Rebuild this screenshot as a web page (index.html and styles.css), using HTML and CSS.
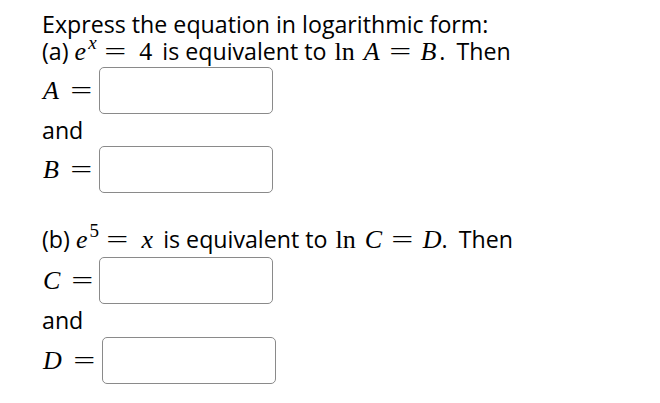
FILE: index.html
```html
<!DOCTYPE html>
<html>
<head>
<meta charset="utf-8">
<link rel="stylesheet" href="styles.css">
</head>
<body>
<div class="page">
  <p class="line">Express the equation in logarithmic form:</p>
  <p class="line">(a) <span class="m m1"><i>e</i><sup><i>x</i></sup><span class="eq eq1">=</span>4</span> is equivalent to <span class="m m2"><span class="ln">ln</span><i>A</i><span class="eq eq2">=</span><i class="last">B</i></span>. <span class="then">Then</span></p>
  <div class="row row-a"><span class="m lbl"><i>A</i><span class="eq">=</span></span><input class="box" type="text"></div>
  <p class="and">and</p>
  <div class="row"><span class="m lbl"><i>B</i><span class="eq">=</span></span><input class="box" type="text"></div>
  <p class="line partb">(b) <span class="m m1"><i>e</i><sup>5</sup><span class="eq eq1">=</span><i>x</i></span> is equivalent to <span class="m m2"><span class="ln">ln</span><i>C</i><span class="eq eq2">=</span><i>D</i></span>. <span class="then">Then</span></p>
  <div class="row row-c"><span class="m lbl"><i>C</i><span class="eq">=</span></span><input class="box" type="text"></div>
  <p class="and">and</p>
  <div class="row row-d"><span class="m lbl wide"><i>D</i><span class="eq">=</span></span><input class="box" type="text"></div>
</div>
</body>
</html>
```
FILE: styles.css
```css
html, body {
  margin: 0;
  background: #ffffff;
}
.page {
  padding: 11px 0 0 42px;
  font-family: "Open Sans", sans-serif;
  font-size: 23.2px;
  color: #000;
}
.line {
  margin: 0;
  height: 27px;
  line-height: 27px;
  white-space: nowrap;
}
.m {
  font-family: "Liberation Serif", serif;
  font-size: 26px;
  line-height: 1;
}
.m i {
  font-style: italic;
}
.m sup {
  font-size: 19px;
  line-height: 0;
  vertical-align: 11px;
  margin-left: 2px;
}
.m1 {
  margin-right: 4px;
}
.m2 {
  margin-left: 2px;
}
.m2 .last {
  margin-right: 3px;
}
.then {
  margin-left: 5px;
}
.ln {
  margin-right: 9px;
}
.eq {
  display: inline-block;
  transform: scaleX(1.5);
  margin: 0 12px;
}
.eq1 {
  margin: 0 17px 0 11px;
}
.eq2 {
  margin: 0 13px 0 13px;
}
.row {
  display: flex;
  align-items: center;
  height: 47px;
}
.row-a {
  margin-top: 2px;
}
.row-c {
  margin-top: 4px;
}
.row-d {
  margin-top: 1px;
}
.lbl {
  width: 57px;
  padding-left: 1px;
  box-sizing: border-box;
  white-space: nowrap;
}
.lbl .eq {
  margin: 0 0 0 15px;
}
.lbl.wide {
  width: 60px;
}
.box {
  width: 174px;
  height: 47px;
  box-sizing: border-box;
  border: 1px solid #8a8a8a;
  border-radius: 5px;
  background: #fff;
  margin: 0;
  padding: 0;
}
.and {
  margin: 0;
  height: 32px;
  line-height: 32px;
}
.partb {
  margin-top: 33px;
}
```
